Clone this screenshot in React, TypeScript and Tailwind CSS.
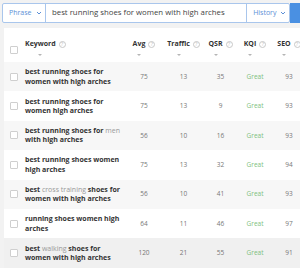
import React from 'react';

type Part = { t: string; hi: boolean };
type Row = { kw: Part[]; avg: number; traffic: number; qsr: number; seo: number };

const b = (t: string): Part => ({ t, hi: true });
const n = (t: string): Part => ({ t, hi: false });

const rows: Row[] = [
  { kw: [b('best running shoes for women with high arches')], avg: 75, traffic: 13, qsr: 35, seo: 93 },
  { kw: [b('best running shoes for women high arches')], avg: 75, traffic: 13, qsr: 9, seo: 93 },
  { kw: [b('best running shoes for '), n('men'), b(' with high arches')], avg: 56, traffic: 10, qsr: 16, seo: 93 },
  { kw: [b('best running shoes women high arches')], avg: 75, traffic: 13, qsr: 32, seo: 94 },
  { kw: [b('best '), n('cross training'), b(' shoes for women with high arches')], avg: 56, traffic: 10, qsr: 41, seo: 93 },
  { kw: [b('running shoes women high arches')], avg: 64, traffic: 11, qsr: 46, seo: 97 },
  { kw: [b('best '), n('walking'), b(' shoes for women with high arches')], avg: 120, traffic: 21, qsr: 55, seo: 91 },
];

const Chevron = () => (
  <svg width="6" height="4" viewBox="0 0 6 4" className="ml-[4px]">
    <path d="M1 1 L3 3 L5 1" fill="none" stroke="#5b8fd6" strokeWidth="1" />
  </svg>
);

const Info = () => (
  <span className="ml-[3px] inline-flex h-[7px] w-[7px] items-center justify-center rounded-full border border-[#c8c8c8] text-[5px] leading-none text-[#c0c0c0]">
    ?
  </span>
);

const Check = () => (
  <span className="block h-[8px] w-[8px] rounded-[1px] border border-[#cfcfcf] bg-white" />
);

const Caret = ({ cls }: { cls: string }) => (
  <svg width="4" height="3" viewBox="0 0 4 3" className={cls}>
    <path d="M0 0 L4 0 L2 2 Z" fill="#b5b5b5" />
  </svg>
);

const Head = ({ label }: { label: string }) => (
  <div className="flex flex-col items-center">
    <div className="flex items-center">
      <span className="text-[7px] font-bold text-[#333]">{label}</span>
      <Info />
    </div>
    <Caret cls="mt-[4px] -translate-x-[5px]" />
  </div>
);

const cols = 'grid grid-cols-[15px_99px_40px_39px_35px_34px_34px] items-center';

export default function App() {
  return (
    <div className="h-[268px] w-[300px] overflow-hidden bg-[#f2f2f2]" style={{ fontFamily: '"Open Sans", sans-serif' }}>
      {/* search bar */}
      <div className="flex h-[28px] items-start pl-[2px] pt-[3px]">
        <div className="flex h-[20px] w-[292px] rounded-[2px] border border-[#a9c6ec] bg-white">
          <div className="flex w-[43px] items-center border-r border-[#a9c6ec] pl-[6px] text-[7px] text-[#5b8fd6]">
            Phrase
            <Chevron />
          </div>
          <div className="flex flex-1 items-center pl-[6px] text-[7.8px] text-[#444]">
            best running shoes for women with high arches
          </div>
          <div className="flex w-[43px] items-center border-l border-[#a9c6ec] pl-[6px] text-[7px] text-[#5b8fd6]">
            History
            <Chevron />
          </div>
        </div>
        <div className="h-[20px] w-[10px] bg-[#4a90e2]" />
      </div>

      {/* table */}
      <div className="ml-[4px] bg-white">
        <div className={`${cols} h-[34px] pl-[6px] pt-[6px]`}>
          <div className="self-start pt-[12px]">
            <Check />
          </div>
          <div className="flex flex-col items-start">
            <div className="flex items-center">
              <span className="text-[7px] font-bold text-[#333]">Keyword</span>
              <Info />
            </div>
            <Caret cls="ml-[13px] mt-[4px]" />
          </div>
          <Head label="Avg" />
          <Head label="Traffic" />
          <Head label="QSR" />
          <Head label="KQI" />
          <Head label="SEO" />
        </div>

        {rows.map((r, i) => (
          <div
            key={i}
            className={`${cols} h-[29.4px] pl-[6px] ${i === 6 ? 'bg-[#f0f0f0]' : i % 2 === 0 ? 'bg-[#f7f7f7]' : 'bg-white'}`}
          >
            <Check />
            <div className="text-[7px] leading-[9.5px]">
              {r.kw.map((p, j) => (
                <span key={j} className={p.hi ? 'font-bold text-[#333]' : 'text-[#999]'}>
                  {p.t}
                </span>
              ))}
            </div>
            <div className="text-center text-[6.5px] text-[#777]">{r.avg}</div>
            <div className="text-center text-[6.5px] text-[#777]">{r.traffic}</div>
            <div className="text-center text-[6.5px] text-[#777]">{r.qsr}</div>
            <div className="text-center text-[6.5px] text-[#7fbf7f]">Great</div>
            <div className="text-center text-[6.5px] text-[#777]">{r.seo}</div>
          </div>
        ))}
      </div>
    </div>
  );
}
